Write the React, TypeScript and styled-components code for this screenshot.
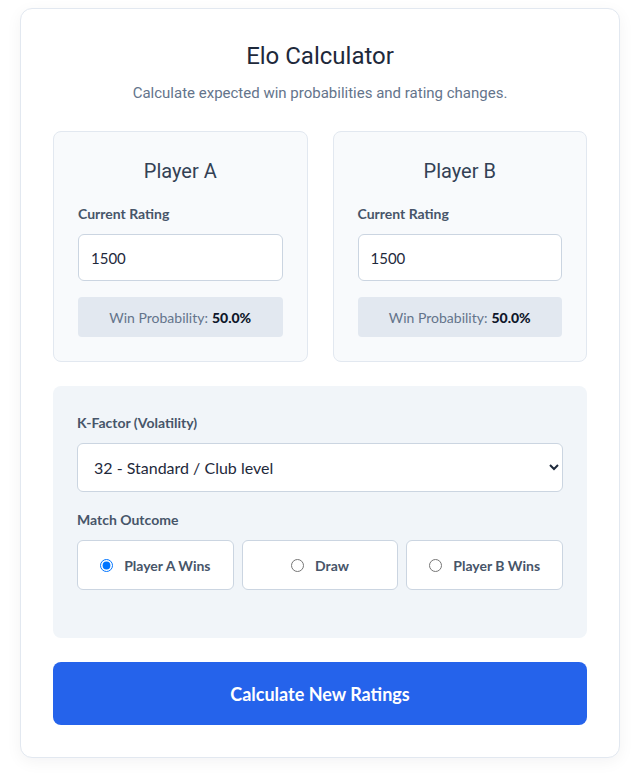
import { useState } from "react";
import styled, { createGlobalStyle } from "styled-components";

const GlobalStyle = createGlobalStyle`
  * { box-sizing: border-box; }
  body {
    margin: 0;
    background: #ffffff;
    font-family: Lato, "Open Sans", sans-serif;
  }
`;

const Page = styled.div`
  padding: 8px 20px 16px;
`;

const Card = styled.div`
  width: 600px;
  background: #ffffff;
  border: 1px solid #e2e8f0;
  border-radius: 12px;
  box-shadow: 0 4px 16px rgba(15, 23, 42, 0.05);
  padding: 33px 32px 32px;
`;

const Title = styled.h1`
  margin: 0;
  text-align: center;
  font: 400 24px Roboto, sans-serif;
  color: #1e293b;
`;

const Subtitle = styled.p`
  margin: 14px 0 29px;
  text-align: center;
  font: 400 15px Roboto, sans-serif;
  color: #64748b;
`;

const Players = styled.div`
  display: grid;
  grid-template-columns: 1fr 1fr;
  gap: 25px;
`;

const PlayerBox = styled.div`
  background: #f8fafc;
  border: 1px solid #e2e8f0;
  border-radius: 8px;
  padding: 27px 24px 24px;
`;

const PlayerName = styled.h2`
  margin: 0 0 22px;
  text-align: center;
  font: 400 20px Roboto, sans-serif;
  color: #334155;
`;

const Label = styled.label`
  display: block;
  font-size: 14px;
  font-weight: 700;
  color: #475569;
  margin-bottom: 12px;
`;

const RatingInput = styled.input`
  width: 100%;
  height: 47px;
  border: 1px solid #cbd5e1;
  border-radius: 6px;
  background: #ffffff;
  padding: 0 12px;
  font: 400 15px Lato, sans-serif;
  color: #1e293b;
  outline: none;
`;

const Probability = styled.div`
  margin-top: 16px;
  height: 40px;
  border-radius: 4px;
  background: #e2e8f0;
  display: flex;
  align-items: center;
  justify-content: center;
  font-size: 14px;
  color: #64748b;

  strong {
    color: #0f172a;
    font-weight: 900;
    margin-left: 4px;
  }
`;

const Settings = styled.div`
  margin-top: 24px;
  background: #f1f5f9;
  border-radius: 8px;
  padding: 28px 24px 48px;
`;

const Select = styled.select`
  width: 100%;
  height: 49px;
  border: 1px solid #cbd5e1;
  border-radius: 6px;
  background: #ffffff;
  padding: 0 12px;
  font: 400 16px Lato, sans-serif;
  color: #1e293b;
  margin-bottom: 19px;
`;

const Outcomes = styled.div`
  display: grid;
  grid-template-columns: repeat(3, 1fr);
  gap: 8px;
`;

const Option = styled.label`
  height: 50px;
  display: flex;
  align-items: center;
  justify-content: center;
  gap: 11px;
  background: #ffffff;
  border: 1px solid #cbd5e1;
  border-radius: 6px;
  font-size: 14px;
  font-weight: 700;
  color: #475569;
  cursor: pointer;

  input {
    margin: 0;
    accent-color: #0075ff;
  }
`;

const Button = styled.button`
  margin-top: 24px;
  width: 100%;
  height: 63px;
  border: none;
  border-radius: 8px;
  background: #2563eb;
  color: #ffffff;
  font: 700 18px Lato, sans-serif;
  cursor: pointer;
`;

const outcomes = ["Player A Wins", "Draw", "Player B Wins"];

function PlayerCard({ name, rating }: { name: string; rating: string }) {
  return (
    <PlayerBox>
      <PlayerName>{name}</PlayerName>
      <Label>Current Rating</Label>
      <RatingInput defaultValue={rating} />
      <Probability>
        Win Probability: <strong>50.0%</strong>
      </Probability>
    </PlayerBox>
  );
}

export default function App() {
  const [outcome, setOutcome] = useState(0);
  return (
    <Page>
      <GlobalStyle />
      <Card>
        <Title>Elo Calculator</Title>
        <Subtitle>Calculate expected win probabilities and rating changes.</Subtitle>
        <Players>
          <PlayerCard name="Player A" rating="1500" />
          <PlayerCard name="Player B" rating="1500" />
        </Players>
        <Settings>
          <Label>K-Factor (Volatility)</Label>
          <Select defaultValue="32">
            <option value="40">40 - New players</option>
            <option value="32">32 - Standard / Club level</option>
            <option value="24">24 - Intermediate</option>
            <option value="16">16 - Masters</option>
          </Select>
          <Label>Match Outcome</Label>
          <Outcomes>
            {outcomes.map((o, i) => (
              <Option key={o}>
                <input
                  type="radio"
                  name="outcome"
                  checked={outcome === i}
                  onChange={() => setOutcome(i)}
                />
                {o}
              </Option>
            ))}
          </Outcomes>
        </Settings>
        <Button>Calculate New Ratings</Button>
      </Card>
    </Page>
  );
}
